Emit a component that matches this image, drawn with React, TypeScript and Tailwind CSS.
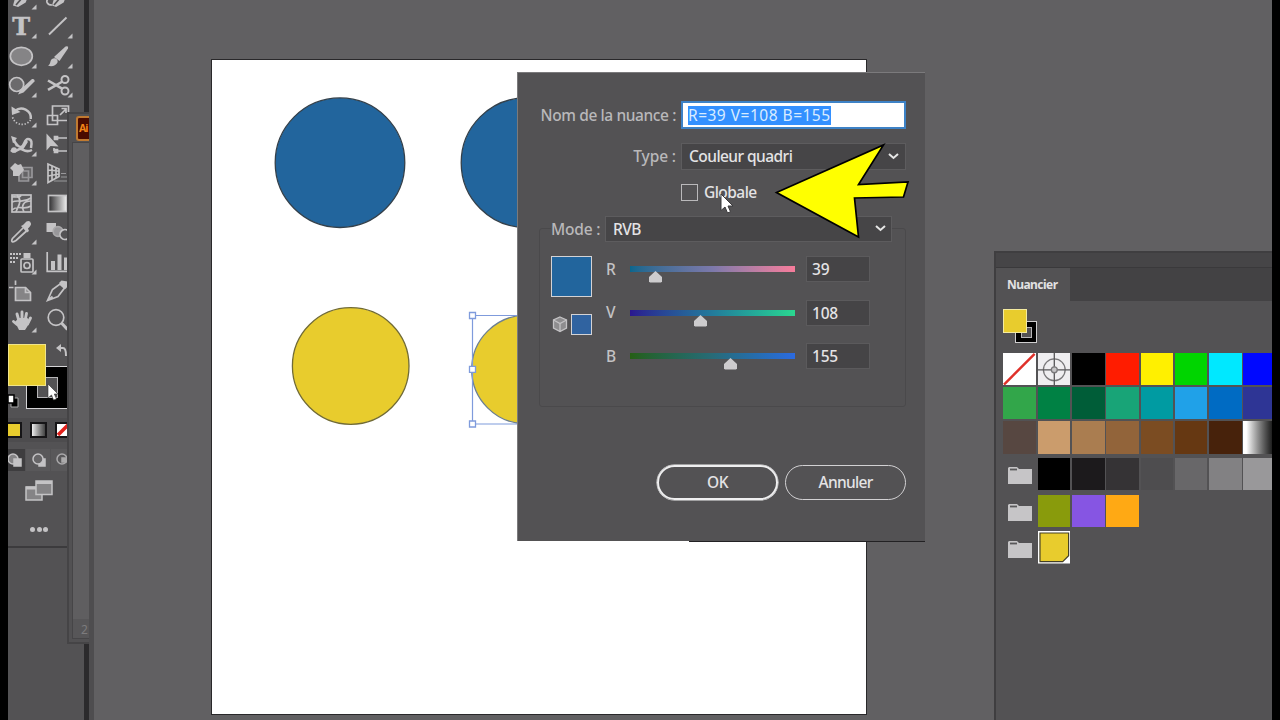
import React from 'react';

const ICON = '#c4c3c5';
const SHAPE_FILL = '#858486';

interface ToolProps {
  menu?: boolean;
  children: React.ReactNode;
}

const Tool: React.FC<ToolProps> = ({ menu, children }) => (
  <button type="button" className="block h-[29.4px] w-9">
    <svg width="36" height="29.4" viewBox="0 0 36 29.4" fill="none" stroke={ICON} strokeWidth="1.7" overflow="visible">
      {children}
      {menu && <path d="M32.500 21.500v5h-5z" fill={ICON} stroke="none" />}
    </svg>
  </button>
);

const Toolbar: React.FC = () => (
  <aside className="relative h-full w-[81px] shrink-0 overflow-hidden border-r-[5px] border-[#2b2a2c] bg-[#535254]">
    <div className="-mt-[17px] -ml-1 grid w-[72px] grid-cols-2">
      <Tool menu>
        <path d="M10 22l2-7 5-8 7 4-3 8-7 4zM11 22l7-7" fill={ICON} />
        <path d="M12 22l6-7" stroke="#535254" />
      </Tool>
      <Tool>
        <path d="M13 22l2-7 5-8 6 4-3 8-7 4z" fill={ICON} />
        <path d="M14 22l6-7" stroke="#535254" />
        <path d="M9 15c-4 3-2 7 3 7" />
      </Tool>
      <Tool menu>
        <text x="17.3" y="23.5" textAnchor="middle" fontSize="24" fontWeight="bold" fill={ICON} stroke={ICON} strokeWidth=".5" className="font-['DejaVu_Serif',serif]">T</text>
      </Tool>
      <Tool menu>
        <path d="M9 22.5L26.5 5.5" strokeWidth="1.9" />
      </Tool>
      <Tool menu>
        <ellipse cx="17.3" cy="14.3" rx="11" ry="9" fill={SHAPE_FILL} />
      </Tool>
      <Tool menu>
        <path d="M8 23.5c3-1 1.500-4.500 4-6.500 3-2 6.500.5 5.500 3.500C16 24 11 25 8 23.500z" fill={ICON} stroke="none" />
        <path d="M14 15L25.500 4.500q3.500-1 2.500 2L19.500 19z" fill={ICON} stroke="none" />
      </Tool>
      <Tool menu>
        <circle cx="12.700" cy="13.500" r="7" fill="#6b6a6c" />
        <path d="M14 23.500l2.500-5L28 8q3-.5 2.500 2.500L19.500 21.500z" fill={ICON} stroke="none" />
      </Tool>
      <Tool menu>
        <circle cx="25" cy="8.500" r="3.500" strokeWidth="2" />
        <circle cx="25" cy="20" r="3.500" strokeWidth="2" />
        <path d="M8 9.500l14.500 8.500M8 19l14.500-8.500" strokeWidth="2.600" />
      </Tool>
      <Tool menu>
        <path d="M11 10A9.500 9.500 0 0 1 26.800 18" strokeWidth="2.400" />
        <path d="M26.500 19a10 10 0 0 1-18-3" strokeDasharray="1.300 1.700" />
        <path d="M7.500 5.500l.5 8.500 8.500-3z" fill={ICON} stroke="none" />
      </Tool>
      <Tool>
        <path d="M12.500 5h16v14.500h-16zM7.500 14.500h10v9h-10z" />
        <path d="M20 14l6-6M21.500 7.500H26v4.500" />
      </Tool>
      <Tool menu>
        <path d="M7 20c4 4 7-2 10-1s5 4 11 1M9 11c4 1 4 7 8 6s3-8 7-8 4 4 3 9M9 8l4 8M18 19l5-8" strokeWidth="2.500" />
        <path d="M7 6l6 2-4 5z" fill={ICON} stroke="none" />
        <circle cx="10" cy="20" r="2" fill={ICON} />
      </Tool>
      <Tool>
        <path d="M6.500 3.500v17l4-4.500 8 .5z" fill={ICON} stroke="none" />
        <path d="M18 8h11M16 21h13M14 21v-3" />
        <path d="M14.500 6.500h3v3h-3zM14.500 19.500h3v3h-3z" fill={ICON} />
      </Tool>
      <Tool menu>
        <path d="M18.500 8.500h9.500v10h-9.500zM15 12h9.500v10H15z" stroke="#98979a" fill="#656466" />
        <path d="M6 9l5-5 3 2 3-1 3 6-5 6H9V12z" fill={ICON} stroke="none" />
      </Tool>
      <Tool>
        <path d="M8 5v18.500l11-6V10zM8 11l11 1M8 17l11-2M12 7v14M16 9v10" />
        <path d="M21 14.500h5M21 18h8M14 22h15" stroke="#98979a" strokeWidth="1.200" />
      </Tool>
      <Tool>
        <rect x="8" y="6" width="19" height="17" fill="#5f5e60" />
        <path d="M8 13c7-3 10 2 19-4M8 21c6-6 11 1 19-4M13 6c6 6 1 11-1 17M27 12c-8 0-10 5-7 11M8 8c5-1 8 2 9-2" />
      </Tool>
      <Tool>
        <defs>
          <linearGradient id="tool-gradient">
            <stop offset="0" stopColor="#2c2b2d" />
            <stop offset="1" stopColor="#f1f1f1" />
          </linearGradient>
        </defs>
        <rect x="8.500" y="6.500" width="18.500" height="16" fill="url(#tool-gradient)" />
      </Tool>
      <Tool menu>
        <path d="M19 10L8.500 20.500q-1.500 3 0 3.500 1 0 3.500-1.500L22.500 13" />
        <path d="M17 8l2-1 3.500-3.500Q26 2 27 5.500q.5 1.500-3 5l1 2.500-2 1.500z" fill={ICON} stroke="none" />
      </Tool>
      <Tool>
        <path d="M6.500 5h9.500v9H6.500z" fill={ICON} stroke="none" />
        <circle cx="18" cy="13.500" r="4.800" fill="#98979a" stroke="#aaa9ab" />
        <path d="M28 12.500a5 5 0 1 0 0 8" fill="#535254" />
      </Tool>
      <Tool menu>
        <path d="M6 6h2m1 0h2m1 0h2m1 0h2M6 10h2m1 0h2m1 0h2M6 14h2m1 0h2" strokeWidth="2" />
        <rect x="17" y="11" width="12" height="13" rx="1" />
        <path d="M19.500 5h7v5h-7z" fill={ICON} stroke="none" />
        <circle cx="23" cy="17.500" r="3" />
      </Tool>
      <Tool>
        <path d="M7.200 4v19.300H28" />
        <path d="M11 13h4v9h-4zM17.500 6.500h4V22h-4zM24 9.500h4V22h-4z" fill={ICON} stroke="none" />
      </Tool>
      <Tool>
        <path d="M11.500 10.500h10l5 5v8h-15z" fill={SHAPE_FILL} />
        <path d="M21.500 10.500v5h5M11.500 3.500v4.500M5 10.500h4.500" />
      </Tool>
      <Tool>
        <path d="M7.500 23.500l5-11L20 7l4.500 4-6.500 8.500zM7.500 23.500l5-4" />
        <path d="M19 6l2.500-2.500 6 1 .5 4.500-2.500 3z" fill={ICON} stroke="none" />
      </Tool>
      <Tool menu>
        <path d="M9.500 15.500l3.500 3M13 8l2 7M18 6v9M22.500 7.500L21 15M26.500 12l-3 6" strokeWidth="2.900" strokeLinecap="round" />
        <path d="M11 16l3.500-4h9l2 4-2.500 5-2 3h-6z" fill={ICON} stroke="none" />
      </Tool>
      <Tool>
        <circle cx="16" cy="11.500" r="7.800" />
        <path d="M21.500 17l6 6.500" strokeWidth="3" />
      </Tool>
    </div>

    {/* Fill and stroke */}
    <div className="relative mt-[8.200px] h-[67px]">
      <div className="absolute top-[22px] left-[18px] flex h-[43px] w-[43px] items-center justify-center border border-[#d5d4d6] bg-black">
        <div className="h-[21px] w-[21px] border border-[#b7b6b8] bg-[#535254]" />
      </div>
      <div className="absolute top-0 left-0 h-[42px] w-[38px] border border-[#f1e58a] bg-[#e8cc2d]" />
      <svg className="absolute top-0 left-[48px]" width="14" height="13" fill="none" stroke={ICON} strokeWidth="2">
        <path d="M4 4h3q3 0 3 8" />
        <path d="M0 4l5-4v8z" fill={ICON} stroke="none" />
      </svg>
      <svg className="absolute top-[49px] left-0" width="11" height="16">
        <path d="M3 5h7v9H3z" fill="#000" stroke="#aaa" />
        <path d="M0 2h6v8H0z" fill="#fff" stroke="#000" strokeWidth="1.500" />
      </svg>
      <svg className="absolute top-[39px] left-[39px]" width="14" height="20">
        <path d="M1 1v14l3.500-3 2 5 3-1-2.200-5H11z" fill="#fff" stroke="#333" strokeWidth=".6" />
      </svg>
    </div>

    <div className="mt-[7px] flex h-6 items-center bg-[#4d4c4e]">
      <div className="h-4 w-[14px] border-2 border-l-0 border-[#161517] bg-[#e8cc2d]" />
      <div className="ml-2 h-4 w-[17px] border-2 border-[#161517] bg-linear-to-r from-[#efefef] to-[#444]" />
      <svg className="ml-2" width="17" height="16">
        <path d="M1 1h15v14H1z" fill="#fff" stroke="#161517" strokeWidth="2" />
        <path d="M3 13L14 2" stroke="#e2211c" strokeWidth="3.500" />
      </svg>
    </div>

    <div className="mt-[7px] flex h-[22px] gap-px">
      <svg className="bg-[#3e3d3f]" width="17" height="22" fill={SHAPE_FILL} stroke={ICON} strokeWidth="1.500">
        <circle cx="5" cy="10" r="5" />
        <path d="M6 10h7v7H6z" fill={ICON} />
      </svg>
      <svg className="bg-[#59585a]" width="24" height="22" fill={SHAPE_FILL} stroke={ICON} strokeWidth="1.500">
        <path d="M13 10h6v7h-6z" fill={ICON} />
        <circle cx="12" cy="10" r="5" fill="#666567" />
      </svg>
      <svg className="bg-[#59585a]" width="24" height="22" fill="none" stroke="#aaa9ab" strokeWidth="1.500">
        <circle cx="11" cy="10" r="5" />
        <path d="M11 9h4v4h-4z" fill="#aaa9ab" />
      </svg>
    </div>

    <svg className="mt-[9px] ml-[17px]" width="29" height="22" fill={SHAPE_FILL} stroke={ICON} strokeWidth="1.500">
      <path d="M1 7h16v13H1z" />
      <path d="M1 8h16" strokeWidth="3" />
      <path d="M11 1h16v13.500H11z" />
      <path d="M11 2.500h16" strokeWidth="3" />
    </svg>
    <div className="mt-[25px] ml-[22px] flex gap-[1.500px]">
      <span className="size-[5px] rounded-full bg-[#c4c3c5]" />
      <span className="size-[5px] rounded-full bg-[#c4c3c5]" />
      <span className="size-[5px] rounded-full bg-[#c4c3c5]" />
    </div>
    <div className="mt-[14px] h-[2px] bg-[#3c3b3d]" />
  </aside>
);

// Second document window, mostly hidden behind the artboard
const DocumentEdge: React.FC = () => (
  <div className="absolute top-[112px] left-[59px] flex h-[532px] w-[22px] flex-col border-2 border-r-0 border-[#454446] bg-[#525153] pb-[3px] pl-[3px]">
    <div className="flex h-[28px] shrink-0 items-center pl-1">
      <div className="h-[25px] w-[13px] shrink-0 rounded-l-[3px] border-2 border-r-0 border-[#c07a31] bg-[#4a0b00] pt-[3px] pl-px text-[10.500px] leading-[15px] font-bold tracking-[-0.9px] text-[#f28418]">Ai</div>
    </div>
    <div className="flex flex-1 items-end border border-r-0 border-[#464547] bg-[#5f5e60]">
      <span className="h-[19px] w-full bg-[#575658] pl-[8px] text-[12px] leading-[22px] text-[#7c7b7d]">2</span>
    </div>
  </div>
);

const Artwork: React.FC = () => (
  <svg width="655" height="655" viewBox="211 59 655 655" className="block">
    <g stroke="#34404a" strokeWidth="1.300">
      <circle cx="340" cy="162.700" r="64.800" fill="#22659d" />
      <circle cx="526" cy="162.700" r="64.800" fill="#22659d" />
      <circle cx="350.700" cy="366" r="58.300" fill="#e8cc2d" stroke="#716b35" />
      <circle cx="526" cy="369.500" r="54.300" fill="#e8cc2d" stroke="#6c7f92" />
    </g>
    <g stroke="#7f9bdc" fill="none">
      <path d="M472.500 315.500h107v108.500h-107z" strokeWidth="1.200" />
      <path d="M469.500 312.500h6v6h-6zM469.500 366.300h6v6h-6zM469.500 421h6v6h-6z" fill="#fff" strokeWidth="1.300" />
    </g>
  </svg>
);

const Chevron: React.FC = () => (
  <svg width="11" height="7" fill="none" stroke="#e6e6e6" strokeWidth="2">
    <path d="M1 1l4.500 4L10 1" />
  </svg>
);

interface ChannelProps {
  name: string;
  value: number;
  track: string;
}

const Channel: React.FC<ChannelProps> = ({ name, value, track }) => (
  <div className="flex h-[26px] items-center">
    <span className="w-[25px] pt-px pl-px text-[#c3c2c4]">{name}</span>
    <div className="relative h-[6px] w-[165px]">
      <div className={`h-full w-full ${track}`} />
      <svg className="absolute top-[5px] -ml-[6px]" style={{ left: `${(value / 255) * 100}%` }} width="13" height="12">
        <path d="M6.500 0L13 6v4.500L12 11.500H1L0 10.500V6z" fill="#cdccce" />
      </svg>
    </div>
    <div className="ml-[11px] h-[26px] w-[64px] border border-[#5b5a5c] bg-[#454446] pl-[5px] leading-[25px] tracking-[-0.2px] text-[#e4e3e5]">{value}</div>
  </div>
);

const SwatchDialog: React.FC = () => (
  <div className="absolute top-[72px] left-[509px] flex h-[468.500px] w-[408px] flex-col border-t border-l border-[#7b7a7c] bg-[#535254] pt-[28px] pr-[19px] text-[15.500px] font-medium tracking-[-0.55px] text-[#e4e3e5]">
    <div className="flex items-center justify-end">
      <label className="mr-[5px] pt-px tracking-[-0.4px] text-[#b9b8ba]">Nom de la nuance :</label>
      <div className="flex h-[28px] w-[225px] items-center border-2 border-[#3d82c6] bg-white pl-[5px]">
        <span className="bg-[#3390ff] leading-[19px] font-normal tracking-[0.5px] text-[#d9ecff]">R=39 V=108 B=155</span>
      </div>
    </div>
    <div className="mt-[14px] flex items-center justify-end">
      <label className="mr-[5px] tracking-[-0.1px] text-[#b9b8ba]">Type :</label>
      <div className="flex h-[27px] w-[225px] items-center justify-between border border-[#5d5c5e] bg-[#464547] pr-[6px] pl-[7px]">
        <span>Couleur quadri</span>
        <Chevron />
      </div>
    </div>
    <div className="mt-[11px] ml-[163px] flex h-[22px] items-center gap-[6px]">
      <span className="size-[17px] border-[1.500px] border-[#bab9bb]" />
      <span className="pt-[2px]">Globale</span>
    </div>

    <fieldset className="mt-[12px] ml-[21px] h-[192px] rounded-[3px] border border-[#4a494b] pl-[11px]">
      <legend className="flex h-[27px] items-center">
        <span className="w-[54px] pt-[2px] tracking-[-0.2px] text-[#b9b8ba]">Mode :</span>
        <div className="flex h-[26px] w-[287px] items-center justify-between border border-[#5d5c5e] bg-[#464547] pr-[5px] pl-[7px]">
          <span className="pt-[2px]">RVB</span>
          <Chevron />
        </div>
      </legend>
      <div className="mt-[14px] flex">
        <div className="w-[54px]">
          <div className="h-[41px] w-[41px] border-[1.500px] border-[#d4d3d5] bg-[#22659d]" />
          <div className="mt-[17px] ml-px flex items-center gap-[3px]">
            <svg width="16" height="17" fill="#8e8d8f" stroke="#c4c3c5" strokeWidth="1.300">
              <path d="M8 1l6.500 3v8L8 15.500 1.500 12V4z" />
              <path d="M1.500 4L8 7.500 14.500 4M8 7.500v8" />
            </svg>
            <div className="h-[21px] w-[21px] border-[1.500px] border-[#d4d3d5] bg-[#3063a0]" />
          </div>
        </div>
        <div className="flex flex-col gap-[17.500px]">
          <Channel name="R" value={39} track="bg-linear-to-r from-[#08668d] via-[#7c79ab] to-[#f77c9b]" />
          <Channel name="V" value={108} track="bg-linear-to-r from-[#2a168f] via-[#237b9b] to-[#2bd78f]" />
          <Channel name="B" value={155} track="bg-linear-to-r from-[#255f13] via-[#286b77] to-[#2c6ae0]" />
        </div>
      </div>
    </fieldset>

    <div className="mt-[58px] flex justify-end gap-[7px]">
      <button type="button" className="h-[35px] w-[121px] rounded-full border-2 border-[#efeff0] pt-px shadow-[0_0_0_0.500px_#efeff0]">OK</button>
      <button type="button" className="h-[35px] w-[121px] rounded-full border-[1.500px] border-[#d2d1d3] pt-px tracking-[-0.7px]">Annuler</button>
    </div>
  </div>
);

const Folder: React.FC = () => (
  <div className="flex h-[32.600px] items-center justify-center">
    <svg width="24" height="18" className="mt-[2px] ml-px">
      <path d="M0 18V2l1-1h8l2 2h13v15z" fill="#c6c5c7" />
      <path d="M2 3.500h7" stroke="#59585a" strokeWidth="1.800" />
    </svg>
  </div>
);

const processColors = [
  'bg-black', 'bg-[#ff1c00]', 'bg-[#fff000]', 'bg-[#00d500]', 'bg-[#00e8ff]', 'bg-[#0008ff]',
  'bg-[#32a64a]', 'bg-[#008144]', 'bg-[#005d38]', 'bg-[#18a477]', 'bg-[#009ba2]', 'bg-[#20a1e8]', 'bg-[#006bc3]', 'bg-[#2e3595]',
  'bg-[#574741]', 'bg-[#cb9c6c]', 'bg-[#aa7d50]', 'bg-[#92643a]', 'bg-[#7b4c22]', 'bg-[#663812]', 'bg-[#47220b]',
  'bg-linear-to-r from-white from-10% to-[#1a1a1a] to-90%',
];
const grays = ['bg-black', 'bg-[#1c1a1c]', 'bg-[#353335]', 'bg-[#4e4d4f]', 'bg-[#686769]', 'bg-[#828183]', 'bg-[#99989a]'];
const brights = ['bg-[#899b0c]', 'bg-[#8655e3]', 'bg-[#ffa914]'];

const Swatch: React.FC<{ color: string }> = ({ color }) => <div className={`h-[32.600px] ${color}`} />;

const SwatchesPanel: React.FC = () => (
  <section className="absolute top-[251px] left-[986px] h-[469px] w-[278px] overflow-hidden border-t-2 border-l-2 border-[#3f3e40] bg-[#535254]">
    <div className="h-[15px] border-b border-[#3a393b] bg-[#464547]" />
    <div className="flex h-[33px] bg-[#434244]">
      <div className="w-[74px] bg-[#535254] pl-[11px] text-[12px] leading-[33px] font-bold tracking-[-0.55px] text-[#e2e1e3]">Nuancier</div>
    </div>
    <div className="relative mt-[8px] ml-[7px] h-[36px]">
      <div className="absolute top-[12px] left-[12px] flex size-[22px] items-center justify-center border border-[#cfcecf] bg-black">
        <div className="size-[11px] border border-[#b7b6b8] bg-[#535254]" />
      </div>
      <div className="absolute top-0 left-0 size-[24px] border border-[#f3eaa0] bg-[#e8cc2d]" />
    </div>
    <div className="mt-[7.500px] ml-[7.400px] grid grid-cols-[repeat(8,32.6px)] gap-[1.700px]">
      <svg width="32.600" height="32.600" viewBox="0 0 33 33" className="bg-white">
        <path d="M1 32L32 1" stroke="#df3029" strokeWidth="2.500" />
      </svg>
      <svg width="32.600" height="32.600" viewBox="0 0 33 33" className="bg-[#efeef0]" fill="none" stroke="#79787a" strokeWidth="1.300">
        <circle cx="16.500" cy="17" r="11" />
        <path d="M0 17h33M16.500 0v33" stroke="#555456" />
        <circle cx="16.500" cy="17" r="3" fill="#c5c4c6" />
      </svg>
      {processColors.map((color) => <Swatch key={color} color={color} />)}
    </div>
    <div className="mt-[4px] ml-[7.400px] grid grid-cols-[repeat(8,32.6px)] gap-x-[1.700px] gap-y-[4.300px]">
      <Folder />
      {grays.map((color) => <Swatch key={color} color={color} />)}
      <Folder />
      {brights.map((color) => <Swatch key={color} color={color} />)}
      <div className="col-start-1">
        <Folder />
      </div>
      <svg width="32.600" height="32.600" viewBox="0 0 33 33">
        <path d="M0 0h33v33H0z" fill="#fff" />
        <path d="M2 2h29v23l-6 6H2z" fill="#e8cc2d" stroke="#433f25" strokeWidth="1.200" />
      </svg>
    </div>
  </section>
);

const App: React.FC = () => {
  return (
    <div className="h-[720px] w-[1280px] overflow-hidden bg-black px-2 font-['Noto_Sans','Open_Sans',sans-serif]">
      <div className="relative flex h-full overflow-hidden bg-[#616062]">
        <Toolbar />
        <main className="flex-1 border-l-[5px] border-[#4e4d4f] pt-[59px] pl-[117px]">
          <div className="h-[656px] w-[656px] bg-white outline -outline-offset-1 outline-[#29282a]">
            <Artwork />
          </div>
        </main>
        <DocumentEdge />
        <SwatchesPanel />
        <div className="absolute top-[540px] left-[681px] h-[1.500px] w-[236px] bg-[#222123]" />
        <SwatchDialog />
        <svg className="absolute top-[193px] left-[712px]" width="14" height="22">
          <path d="M1 1v16.500l4-3.500 2.500 6 3-1.300-2.500-5.700h5z" fill="#fff" stroke="#3b3a3c" />
        </svg>
        <svg className="absolute top-[140px] left-[762px]" width="147" height="102">
          <path d="M6.500 52.500L113.500 5 88.500 44.500l49.500-2.500-4.500 15-49 1 4 39z" fill="#ffff00" stroke="#000" strokeWidth="1.700" />
        </svg>
      </div>
    </div>
  );
};

export default App;
